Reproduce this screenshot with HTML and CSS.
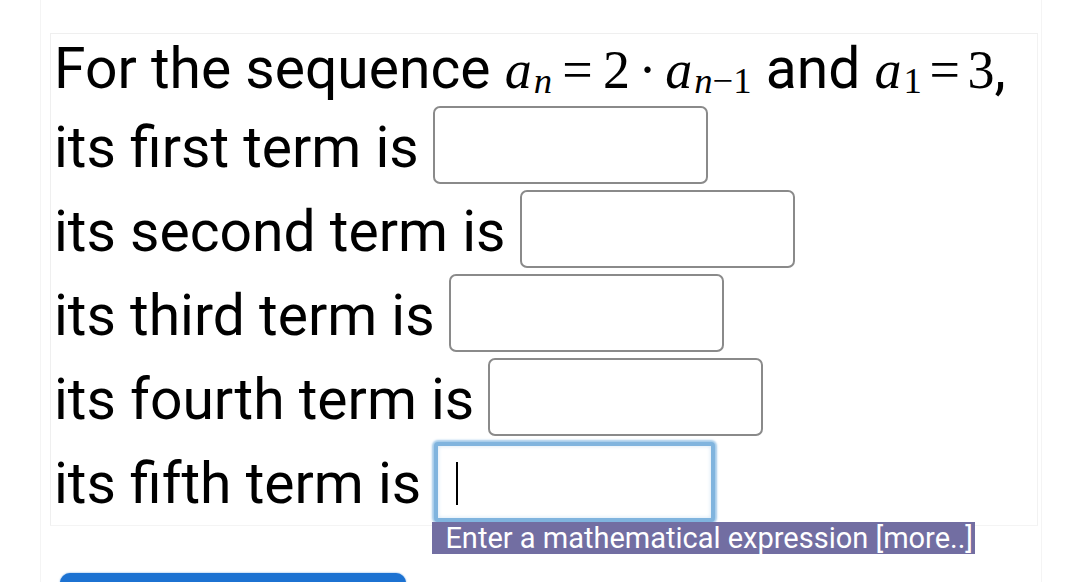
FILE: index.html
```html
<!DOCTYPE html>
<html lang="en">
<head>
<meta charset="utf-8">
<title>Sequence question</title>
<link rel="stylesheet" href="styles.css">
</head>
<body>
<div class="outer">
  <div class="panel">
    <div class="line first">For the sequence <span class="math"><i>a</i><sub><i>n</i></sub><span class="rel">=</span>2<span class="dot">·</span><i>a</i><sub><i>n</i>−1</sub></span> and <span class="math"><i>a</i><sub>1</sub><span class="rel r2">=</span>3</span>,</div>
    <div class="line">its first term is <span class="box"></span></div>
    <div class="line">its second term is <span class="box"></span></div>
    <div class="line">its third term is <span class="box"></span></div>
    <div class="line">its fourth term is <span class="box"></span></div>
    <div class="line">its fifth term is <span class="box focus"><span class="caret"></span><span class="tip">Enter a mathematical expression [more..]</span></span></div>
  </div>
  <div class="btn"></div>
</div>
</body>
</html>
```
FILE: styles.css
```css
html, body {
  margin: 0;
  padding: 0;
  background: #ffffff;
}
body {
  font-family: Roboto, "Noto Sans", sans-serif;
  color: #000;
  overflow: hidden;
  height: 582px;
}
.outer {
  margin-left: 40px;
  width: 1002px;
  height: 582px;
  border-left: 1px solid #f4f4f4;
  border-right: 1px solid #f4f4f4;
  padding-top: 33px;
  box-sizing: border-box;
  overflow: hidden;
}
.panel {
  margin-left: 9px;
  width: 988px;
  height: 493px;
  border-top: 1px solid #efefef;
  border-left: 1px solid #efefef;
  border-right: 1px solid #f2f2f2;
  border-bottom: 1px solid #f4f4f4;
  box-sizing: border-box;
  padding-left: 3px;
  font-size: 57px;
}
.line {
  line-height: 57px;
  white-space: nowrap;
}
.line.first {
  line-height: 69px;
}
.math {
  font-family: "Liberation Serif", "DejaVu Serif", serif;
  font-size: 54px;
  line-height: 1;
}
.math i {
  font-style: italic;
}
.math sub {
  font-size: 0.68em;
  line-height: 0;
  vertical-align: -0.14em;
  margin-left: 2px;
}
.rel {
  margin: 0 0.19em;
}
.rel.r2 {
  margin: 0 0.14em;
}
.dot {
  margin: 0 0.16em;
}
.box {
  display: inline-block;
  width: 275px;
  height: 78px;
  margin: 3px 0 3px 0;
  box-sizing: border-box;
  border: 2px solid #8a8a8a;
  border-radius: 7px;
  vertical-align: -20px;
  background: #fff;
  position: relative;
}
.box.focus {
  width: 281px;
  height: 80px;
  margin-left: -1px;
  border: 4px solid #80b4de;
  border-radius: 4px;
  vertical-align: -22px;
  box-shadow: 0 0 2px 2px #a4cbea, inset 0 0 4px #cfe3f4;
}
.caret {
  position: absolute;
  left: 18px;
  top: 16px;
  width: 2px;
  height: 43px;
  background: #000;
}
.tip {
  position: absolute;
  left: -6px;
  top: 76px;
  width: 543px;
  height: 32px;
  background: #726ea2;
  color: #fff;
  font-size: 29px;
  line-height: 32px;
  padding-left: 13px;
  box-sizing: border-box;
  white-space: nowrap;
}
.btn {
  margin-top: 47px;
  margin-left: 19px;
  width: 346px;
  height: 40px;
  background: #1c72d2;
  border-radius: 10px 10px 0 0;
  box-shadow: 0 0 2px #5c9be0;
}
```
